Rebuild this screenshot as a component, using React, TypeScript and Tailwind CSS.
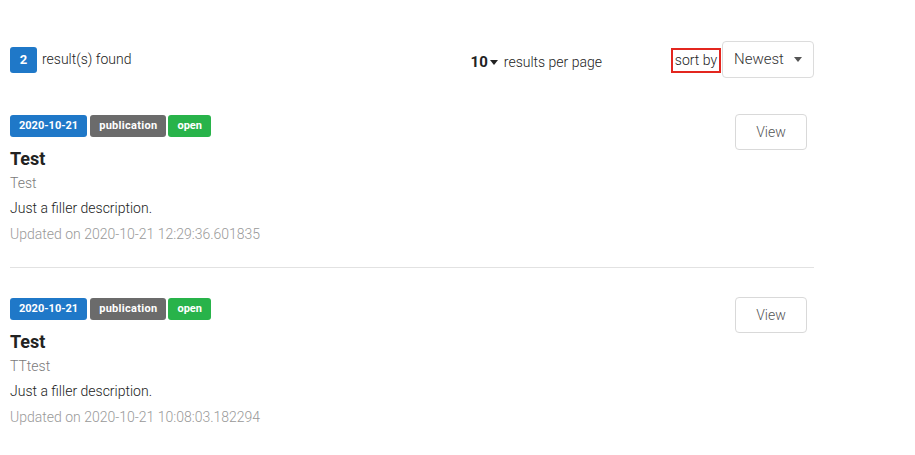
const items = [
  {
    date: '2020-10-21',
    title: 'Test',
    subtitle: 'Test',
    description: 'Just a filler description.',
    updated: '2020-10-21 12:29:36.601835',
  },
  {
    date: '2020-10-21',
    title: 'Test',
    subtitle: 'TTtest',
    description: 'Just a filler description.',
    updated: '2020-10-21 10:08:03.182294',
  },
]

function Caret() {
  return (
    <svg width="8" height="5" viewBox="0 0 8 5" className="fill-current" aria-hidden>
      <path d="M0 0h8L4 5z" />
    </svg>
  )
}

function ResultCard({ item, last }: { item: (typeof items)[number]; last: boolean }) {
  return (
    <div className={last ? 'pt-[30px]' : 'border-b border-[#e2e2e2] pb-[20px]'}>
      <div className="flex items-start justify-between">
        <div className="flex flex-col">
          <div className="flex h-[22px] text-[11px] font-bold leading-[22px] text-white">
            <span className="rounded-[3px] bg-[#1f78c8] px-[9px]">{item.date}</span>
            <span className="ml-[3px] rounded-[3px] bg-[#6b6b6b] px-[9px] tracking-[0.3px]">publication</span>
            <span className="ml-[2px] rounded-[3px] bg-[#28b34a] px-[9px]">open</span>
          </div>
          <h2 className="mt-[10px] text-[18px] font-bold leading-[24px] text-[#222]">{item.title}</h2>
          <p className="text-[14px] font-light leading-[25px] text-[#7a7a7a]">{item.subtitle}</p>
          <p className="text-[14px] font-light leading-[25px] text-[#222]">{item.description}</p>
          <p className="text-[14px] font-light leading-[26px] text-[#999]">Updated on {item.updated}</p>
        </div>
        <button className="mr-[7px] mt-[-1px] h-[36px] w-[72px] rounded-[4px] border border-[#d9d9d9] bg-white text-[14px] font-light text-[#555]">
          View
        </button>
      </div>
    </div>
  )
}

export default function App() {
  return (
    <div className="min-h-screen bg-white font-['Roboto','Liberation_Sans',sans-serif] text-[#222]">
      <div className="w-[814px] pl-[10px] pt-[41px]">
        <div className="flex h-[37px] items-center">
          <div className="flex flex-1 items-center gap-[5px]">
            <span className="flex h-[26px] w-[27px] items-center justify-center rounded-[3px] bg-[#1f78c8] text-[13px] font-bold text-white">
              2
            </span>
            <span className="text-[14px] font-light">result(s) found</span>
          </div>
          <div className="mt-[5px] flex items-center text-[14px]">
            <span className="text-[15px] font-bold">10</span>
            <span className="ml-[2px] mr-[6px] mt-[1px]">
              <Caret />
            </span>
            <span className="font-light">results per page</span>
          </div>
          <div className="ml-[69px] flex items-center">
            <span className="mt-[2px] flex h-[25px] w-[50px] items-center justify-center border-2 border-[#e3261f] text-[14px] font-light">
              sort by
            </span>
            <button className="ml-[1px] flex h-[37px] w-[92px] items-center justify-center gap-[10px] rounded-[4px] border border-[#dcdcdc] bg-white text-[15px] font-light text-[#333]">
              Newest
              <span className="text-[#555]">
                <Caret />
              </span>
            </button>
          </div>
        </div>
        <div className="mt-[37px]">
          {items.map((item, i) => (
            <ResultCard key={i} item={item} last={i === items.length - 1} />
          ))}
        </div>
      </div>
    </div>
  )
}
